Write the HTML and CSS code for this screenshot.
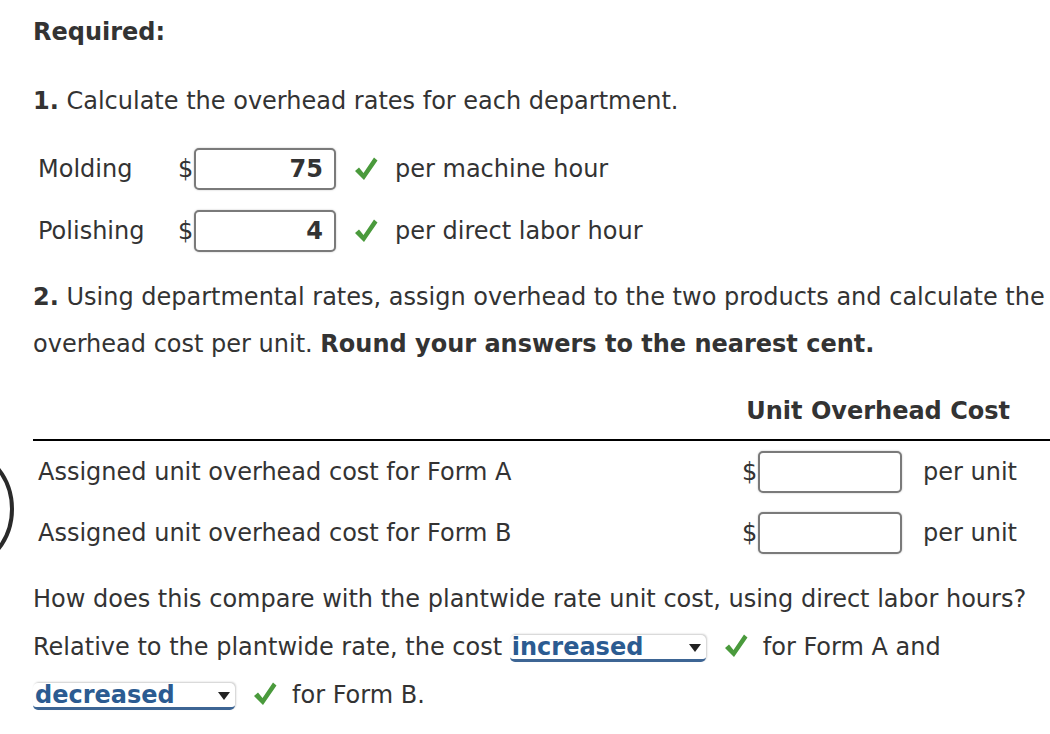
FILE: index.html
```html
<!DOCTYPE html>
<html lang="en">
<head>
  <meta charset="UTF-8">
  <meta name="viewport" content="width=device-width, initial-scale=1.0">
  <title>Required</title>
  <link rel="stylesheet" href="styles.css">
</head>
<body>
  <div class="page">
    <!-- Enunciado -->
    <p class="required">Required:</p>

    <p class="question"><b>1.</b> Calculate the overhead rates for each department.</p>

    <!-- Taxas por departamento -->
    <div class="rates">
      <div class="rate-row">
        <span class="rate-label">Molding</span>
        <span class="dollar">$</span>
        <input class="answer filled" type="text" value="75" readonly>
        <svg class="check" viewBox="0 0 24 26"><path d="M1 15 L5 11.5 L9.5 17 L20 1.5 L23.5 4.5 L10 24 Z"/></svg>
        <span class="unit">per machine hour</span>
      </div>
      <div class="rate-row">
        <span class="rate-label">Polishing</span>
        <span class="dollar">$</span>
        <input class="answer filled" type="text" value="4" readonly>
        <svg class="check" viewBox="0 0 24 26"><path d="M1 15 L5 11.5 L9.5 17 L20 1.5 L23.5 4.5 L10 24 Z"/></svg>
        <span class="unit">per direct labor hour</span>
      </div>
    </div>

    <p class="question tall"><b>2.</b> Using departmental rates, assign overhead to the two products and calculate the overhead cost per unit. <b>Round your answers to the nearest cent.</b></p>

    <!-- Tabela de custo unitário -->
    <div class="cost-table">
      <div class="cost-head">
        <span class="head-title">Unit Overhead Cost</span>
      </div>
      <div class="cost-row">
        <span class="cost-label">Assigned unit overhead cost for Form A</span>
        <span class="dollar">$</span>
        <input class="answer wide" type="text" value="">
        <span class="unit">per unit</span>
      </div>
      <div class="cost-row">
        <span class="cost-label">Assigned unit overhead cost for Form B</span>
        <span class="dollar">$</span>
        <input class="answer wide" type="text" value="">
        <span class="unit">per unit</span>
      </div>
    </div>

    <!-- Comparação -->
    <div class="compare">
      <p>How does this compare with the plantwide rate unit cost, using direct labor hours?</p>
      <p>Relative to the plantwide rate, the cost <span class="dropdown">increased<span class="caret"></span></span><svg class="check" viewBox="0 0 24 26"><path d="M1 15 L5 11.5 L9.5 17 L20 1.5 L23.5 4.5 L10 24 Z"/></svg>for Form A and <span class="dropdown short">decreased<span class="caret"></span></span><svg class="check" viewBox="0 0 24 26"><path d="M1 15 L5 11.5 L9.5 17 L20 1.5 L23.5 4.5 L10 24 Z"/></svg>for Form B.</p>
    </div>

    <div class="ring"></div>
  </div>
</body>
</html>
```

FILE: styles.css
```css
/* Estilos gerais */
* {
  margin: 0;
  padding: 0;
  box-sizing: border-box;
}

body {
  background-color: #fff;
  color: #333;
  font-family: "DejaVu Sans", Verdana, sans-serif;
  font-size: 24px;
  overflow: hidden;
}

.page {
  position: relative;
  padding: 17px 0 0 33px;
  min-height: 734px;
}

.required {
  font-weight: bold;
  line-height: 30px;
  margin-bottom: 39px;
}

.question {
  line-height: 30px;
}

.question.tall {
  line-height: 47px;
  margin-top: 12px;
}

/* Taxas */
.rates {
  margin-top: 22px;
  padding-left: 5px;
}

.rate-row {
  display: flex;
  align-items: center;
  height: 62px;
}

.rate-label {
  width: 140px;
}

.dollar {
  width: 16px;
}

.answer {
  width: 142px;
  height: 42px;
  border: 2px solid #7a7a7a;
  border-radius: 5px;
  padding: 0 11px;
  font-family: inherit;
  font-size: 24px;
  font-weight: bold;
  color: #333;
  text-align: right;
  background: #fff;
  box-shadow: 0 0 2px rgba(0, 0, 0, 0.25);
  outline: none;
}

.answer.wide {
  width: 144px;
}

.check {
  width: 24px;
  height: 26px;
  fill: #4a9a3c;
  flex: none;
}

.rate-row .check {
  margin: 0 17px 0 18px;
}

/* Tabela */
.cost-table {
  margin-top: 28px;
}

.cost-head {
  display: flex;
  justify-content: flex-end;
  padding: 0 40px 13px 0;
  border-bottom: 2px solid #000;
}

.head-title {
  font-weight: bold;
  line-height: 30px;
}

.cost-row {
  display: flex;
  align-items: center;
  height: 61px;
  padding-left: 5px;
}

.cost-label {
  flex: 1;
}

.cost-row .unit {
  width: 148px;
  padding-left: 21px;
}

/* Comparação */
.compare {
  margin-top: 12px;
  line-height: 48px;
}

.compare .check {
  vertical-align: -4px;
  margin: 0 15px 0 18px;
}

.dropdown {
  display: inline-block;
  position: relative;
  width: 196px;
  line-height: 24px;
  background: #fff;
  border-radius: 5px;
  border-bottom: 3px solid #3d6594;
  box-shadow: 1px -1px 2px rgba(0, 0, 0, 0.2);
  color: #2b5b91;
  font-weight: bold;
  padding-left: 2px;
}

.dropdown.short {
  width: 202px;
}

.caret {
  position: absolute;
  right: 5px;
  top: 9px;
  border-left: 6px solid transparent;
  border-right: 6px solid transparent;
  border-top: 8px solid #222;
}

/* Círculo na margem */
.ring {
  position: absolute;
  left: -120px;
  top: 442px;
  width: 134px;
  height: 134px;
  border: 4px solid #2a2a2a;
  border-radius: 50%;
}
```
